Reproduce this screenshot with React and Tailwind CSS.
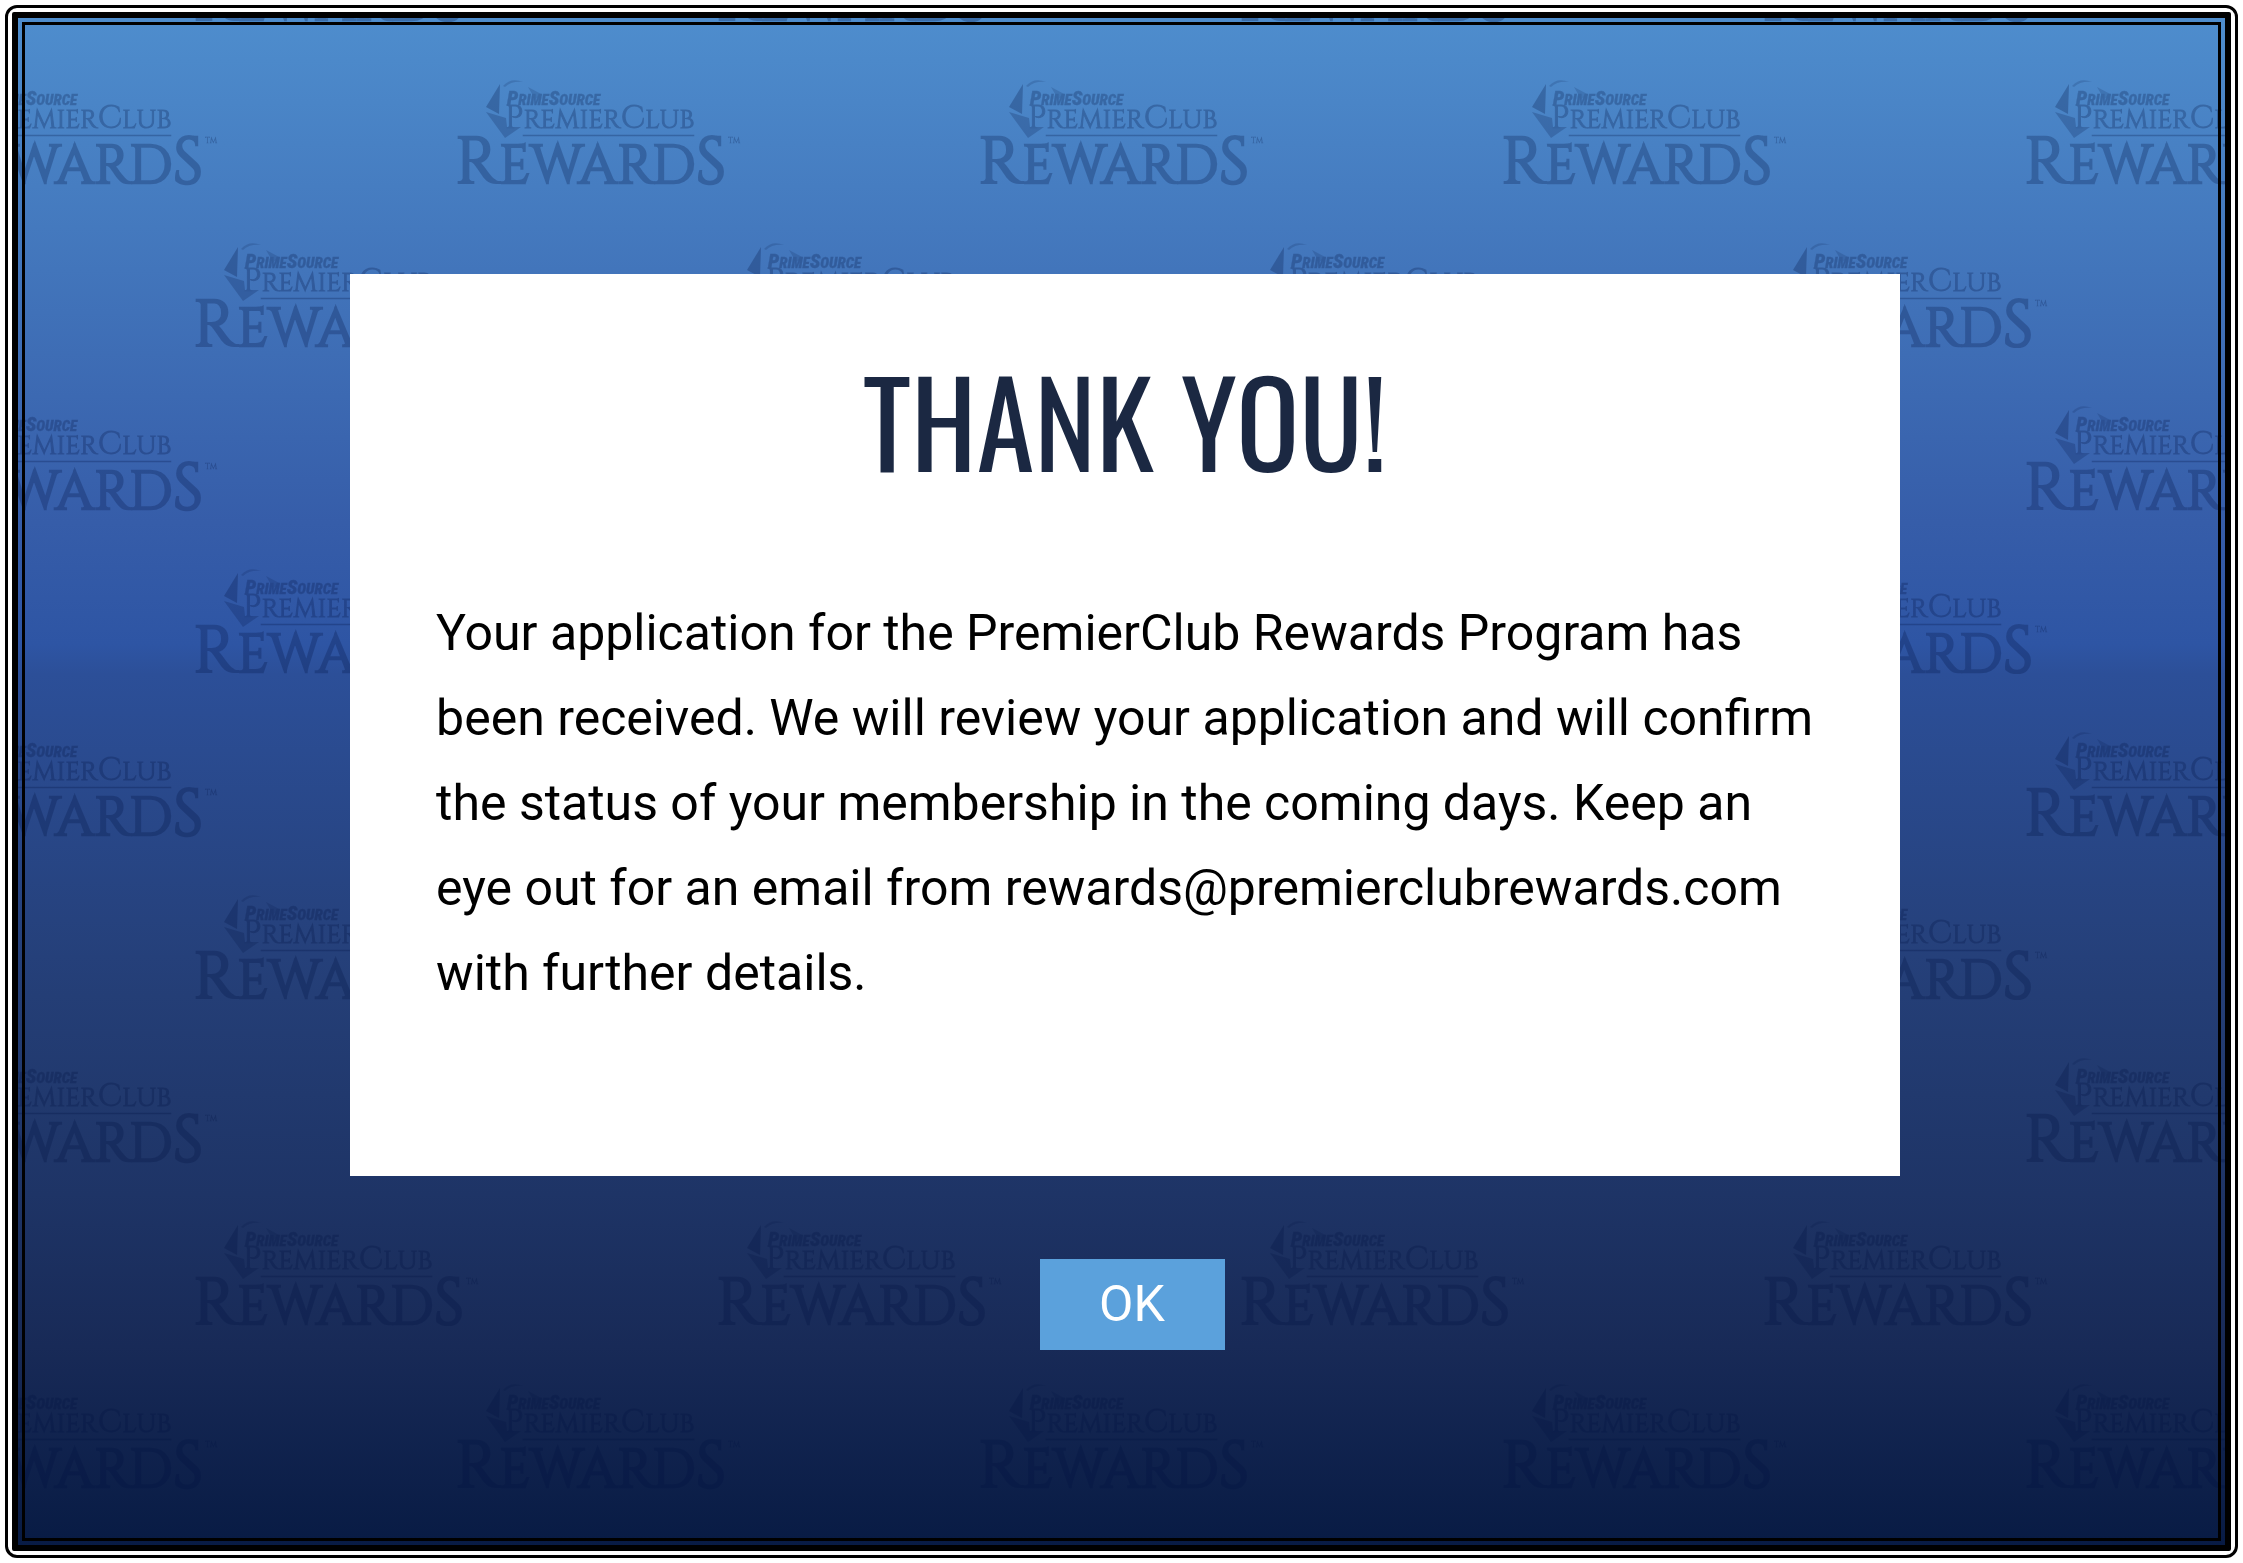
import React from "react";

const TILE_W = 523;
const TILE_H = 326;

function WatermarkLogo({ x, y }) {
  return (
    <g transform={`translate(${x} ${y})`}>
      {/* folded diamond */}
      <path d="M43 -99 L29 -76 L42 -69 Z" />
      <path d="M29 -71 L49 -65 L50 -56 L64 -56 L48 -45 Z" opacity="0.8" />
      <path d="M46 -97 Q54 -106 66 -101 Q54 -102 48 -96 Z" opacity="0.6" />
      <path d="M71 -96 L86 -88 L78 -84 Z" opacity="0.6" />
      <g className="font-['Roboto_Condensed','Liberation_Sans',sans-serif] font-black italic stroke-[#001040]">
        <text x="50" y="-78" fontSize="20" strokeWidth="0.3">P<tspan fontSize="15">RIME</tspan>S<tspan fontSize="15">OURCE</tspan></text>
      </g>
      <g className="font-['Cinzel','Liberation_Serif',serif] stroke-[#001040]">
        <text x="48" y="-55" fontSize="32" strokeWidth="1">P<tspan fontSize="26">REMIER</tspan>C<tspan fontSize="26">LUB</tspan></text>
        <rect x="66" y="-48" width="171" height="1" strokeWidth="0.5" />
        <text x="-2" y="0" fontSize="65" strokeWidth="2.5">R<tspan fontSize="54">EWARD</tspan>S</text>
        <text x="271" y="-40" fontSize="8" strokeWidth="0.3">TM</text>
      </g>
    </g>
  );
}

function Watermark() {
  return (
    <svg aria-hidden="true" className="absolute inset-0 w-full h-full fill-[#001040] opacity-25">
      <defs>
        <pattern id="logos" x="-86" y="4" width={TILE_W} height={TILE_H} patternUnits="userSpaceOnUse">
          <WatermarkLogo x={2} y={161} />
          <WatermarkLogo x={263} y={324} />
          <WatermarkLogo x={-260} y={324} />
        </pattern>
      </defs>
      <rect width="100%" height="100%" fill="url(#logos)" />
    </svg>
  );
}

export default function App() {
  return (
    <div className="min-h-screen bg-white p-[5px] flex">
      <div className="flex-1 flex rounded-xl border-3 border-black p-1">
        <div className="relative flex-1 flex rounded-xs border-6 border-black p-1 bg-[linear-gradient(to_bottom,#4e8dcd,#365da9_33%,#2e55a4_41%,#2c4f98_43%,#243e76_64%,#1e3466_77%,#182a57_87%,#081b44)]">
          <Watermark />
          <main className="relative flex-1 flex flex-col items-center border-3 border-black pt-[249px] pb-16 pl-[7px]">
            <section className="w-[70.9%] bg-white px-[86px] pt-[72px] pb-[160px]">
              <h1 className="text-center font-['Oswald','Roboto_Condensed',sans-serif] font-normal text-[117px] leading-[146px] text-[#1b2842]">
                THANK YOU!
              </h1>
              <p className="mt-[99px] font-['Roboto',sans-serif] text-[50px] leading-[85px] text-black">
                Your application for the PremierClub Rewards Program has been received. We will review your
                application and will confirm the status of your membership in the coming days. Keep an eye
                out for an email from rewards@premierclubrewards.com with further details.
              </p>
            </section>
            <button type="button" className="mt-[83px] ml-3.5 w-[185px] h-[91px] bg-[#5ba1dc] font-['Roboto',sans-serif] text-[50px] text-white">
              OK
            </button>
          </main>
        </div>
      </div>
    </div>
  );
}
